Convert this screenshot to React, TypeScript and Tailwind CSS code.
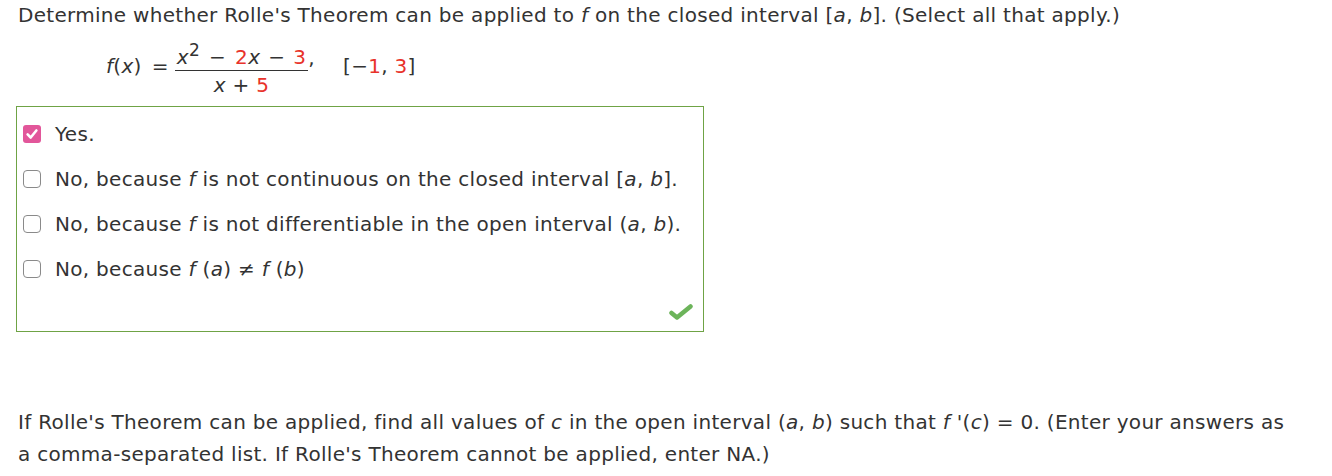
import React from "react";

const RED = "text-[#e8322a]";

function Box({ checked }: { checked?: boolean }) {
  if (checked) {
    return (
      <span className="w-[18px] h-[18px] rounded-[3px] bg-[#e2569a] flex items-center justify-center shrink-0">
        <svg viewBox="0 0 16 16" className="w-[14px] h-[14px]">
          <path d="M3 8.5 L6.5 12 L13 4" fill="none" stroke="white" strokeWidth="3" strokeLinecap="round" strokeLinejoin="round" />
        </svg>
      </span>
    );
  }
  return <span className="w-[18px] h-[18px] rounded-[4px] border-[1.5px] border-[#8a8a8a] bg-white shrink-0" />;
}

function Option({ checked, children }: { checked?: boolean; children: React.ReactNode }) {
  return (
    <div className="flex items-center gap-[14px] h-[45px]">
      <Box checked={checked} />
      <span>{children}</span>
    </div>
  );
}

export default function App() {
  return (
    <div
      className="w-[1332px] h-[476px] bg-white text-[#333] text-[20px] leading-[30px] tracking-[0.3px] pl-[18px] overflow-hidden"
      style={{ fontFamily: '"DejaVu Sans", Verdana, sans-serif' }}
    >
      <p className="h-[30px]">
        Determine whether Rolle's Theorem can be applied to <i>f</i> on the closed interval [<i>a</i>, <i>b</i>]. (Select all that apply.)
      </p>

      {/* equation */}
      <div className="flex items-center ml-[88px] mt-[9px] h-[64px]">
        <span className="mb-[10px]"><i>f</i>(<i>x</i>)</span>
        <span className="ml-[10px] mr-[6px] mb-[10px]">=</span>
        <div className="flex flex-col items-center leading-[26px]">
          <span className="px-[2px] border-b-[1.5px] border-[#333]">
            <i>x</i><sup className="text-[17px]">2</sup>
            <span className="mx-[9px]">−</span>
            <span className={RED}>2</span><i>x</i>
            <span className="mx-[8px]">−</span>
            <span className={RED}>3</span>
          </span>
          <span className="pt-[1px]">
            <i>x</i> + <span className={RED}>5</span>
          </span>
        </div>
        <span className="mb-[26px]">,</span>
        <span className="ml-[28px] mb-[10px]">
          [−<span className={RED}>1</span>, <span className={RED}>3</span>]
        </span>
      </div>

      <div className="mt-[3px] ml-[-2px] w-[688px] h-[226px] border border-[#6fa345] pl-[6px] pt-[4px] flex flex-col relative">
        <Option checked>Yes.</Option>
        <Option>
          No, because <i>f</i> is not continuous on the closed interval [<i>a</i>, <i>b</i>].
        </Option>
        <Option>
          No, because <i>f</i> is not differentiable in the open interval (<i>a</i>, <i>b</i>).
        </Option>
        <Option>
          No, because <i>f</i> (<i>a</i>) ≠ <i>f</i> (<i>b</i>)
        </Option>
        <svg viewBox="0 0 24 18" className="absolute right-[10px] bottom-[10px] w-[24px] h-[18px]">
          <path d="M2.5 10 L8 14.5 L21.5 3.5" fill="none" stroke="#6cb45a" strokeWidth="4.5" strokeLinecap="round" strokeLinejoin="round" />
        </svg>
      </div>

      <p className="mt-[74px] leading-[32px] w-[1284px]">
        If Rolle's Theorem can be applied, find all values of <i>c</i> in the open interval (<i>a</i>, <i>b</i>) such that <i>f</i> '(<i>c</i>) = 0. (Enter your answers as a comma-separated list. If Rolle's Theorem cannot be applied, enter NA.)
      </p>
    </div>
  );
}
